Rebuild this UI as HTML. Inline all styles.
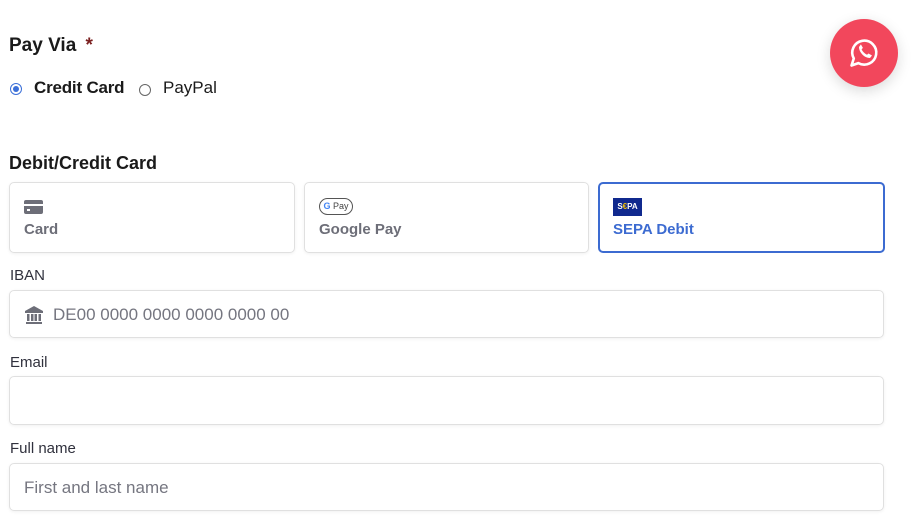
<!DOCTYPE html>
<html><head><style>
body{margin:0;background:#fff;font-family:"Liberation Sans",sans-serif;width:922px;height:520px;overflow:hidden;position:relative;color:#30313d}
.a{position:absolute}
.h{font-weight:bold;font-size:19px;color:#1a1a1a}
.tab{position:absolute;top:182px;height:71px;border:1px solid #e0e0e0;border-radius:5px;box-shadow:0 1px 3px rgba(0,0,0,.06);box-sizing:border-box}
.tab span{position:absolute;left:14px;top:38px;font-size:15px;color:#6d6e78;font-weight:bold}
.lbl{position:absolute;left:10px;font-size:15px;color:#30313d}
.inp{position:absolute;left:9px;width:875px;height:48px;border:1px solid #e0e0e0;border-radius:5px;box-shadow:0 1px 3px rgba(0,0,0,.06);box-sizing:border-box;font-size:17px;color:#757680}
</style></head><body>
<div class="a h" style="left:9px;top:35px">Pay Via <span style="color:#7a1f1f;margin-left:4px">*</span></div>
<div class="a" style="left:10px;top:83px;width:12px;height:12px;border:1px solid #3b6fd8;border-radius:50%;box-sizing:border-box"><div style="position:absolute;left:2px;top:2px;width:6px;height:6px;border-radius:50%;background:#3b6fd8"></div></div>
<div class="a" style="left:34px;top:78px;font-size:17px;font-weight:bold;color:#1a1a1a;letter-spacing:-0.2px">Credit Card</div>
<div class="a" style="left:139px;top:84px;width:12px;height:12px;border:1px solid #666;border-radius:50%;box-sizing:border-box"></div>
<div class="a" style="left:163px;top:78px;font-size:17px;color:#1a1a1a">PayPal</div>
<div class="a" style="left:830px;top:19px;width:68px;height:68px;border-radius:50%;background:#f2475c;box-shadow:0 4px 14px rgba(0,0,0,.15)">
<svg width="68" height="68" viewBox="0 0 68 68"><path d="M21.5 46.5l2.3-7a12 12 0 1 1 4.6 4.6z" fill="none" stroke="#fff" stroke-width="2.6" stroke-linejoin="round"/><path d="M29 28c0 5 5 11 11 11l2-2.5-3.5-2-1.5 1.3c-2.4-1.2-4.2-3-5.4-5.4l1.3-1.5-2-3.5z" fill="#fff"/></svg></div>
<div class="a h" style="left:9px;top:153px;font-size:18px">Debit/Credit Card</div>
<div class="tab" style="left:9px;width:286px"><div class="a" style="left:14px;top:17px;width:19px;height:14px;background:#6d6e78;border-radius:2px"><div style="position:absolute;left:0;top:4px;width:19px;height:2px;background:#fff"></div><div style="position:absolute;left:3px;top:9px;width:3px;height:2px;background:#fff"></div></div><span>Card</span></div>
<div class="tab" style="left:304px;width:285px"><div class="a" style="left:14px;top:15px;width:34px;height:17px;border:1px solid #555;border-radius:9px;box-sizing:border-box;font-size:9px;line-height:15px;text-align:center;color:#444"><b style="color:#4285f4">G</b> Pay</div><span>Google Pay</span></div>
<div class="tab" style="left:598px;width:287px;border:2px solid #3c6bd1;box-shadow:none"><div class="a" style="left:13px;top:14px;width:29px;height:18px;background:#10298e;color:#fff;font-size:8px;font-weight:bold;line-height:18px;text-align:center">S<span style="position:static;color:#f6c200;font-size:8px">€</span>PA</div><span style="left:13px;top:37px;color:#3c6bd1">SEPA Debit</span></div>
<div class="lbl" style="top:267px">IBAN</div>
<div class="inp" style="top:290px"><svg class="a" style="left:14px;top:14px" width="20" height="20" viewBox="0 0 20 20"><path d="M10 1L1 6v2h18V6z M2 17h16v2H2z M3 9h2.5v7H3z M7 9h2.5v7H7z M10.5 9h2.5v7h-2.5z M14.5 9H17v7h-2.5z" fill="#6d6e78"/></svg><span class="a" style="left:43px;top:14px">DE00 0000 0000 0000 0000 00</span></div>
<div class="lbl" style="top:354px">Email</div>
<div class="inp" style="top:376px;height:49px"></div>
<div class="lbl" style="top:440px">Full name</div>
<div class="inp" style="top:463px"><span class="a" style="left:14px;top:14px">First and last name</span></div>
</body></html>
